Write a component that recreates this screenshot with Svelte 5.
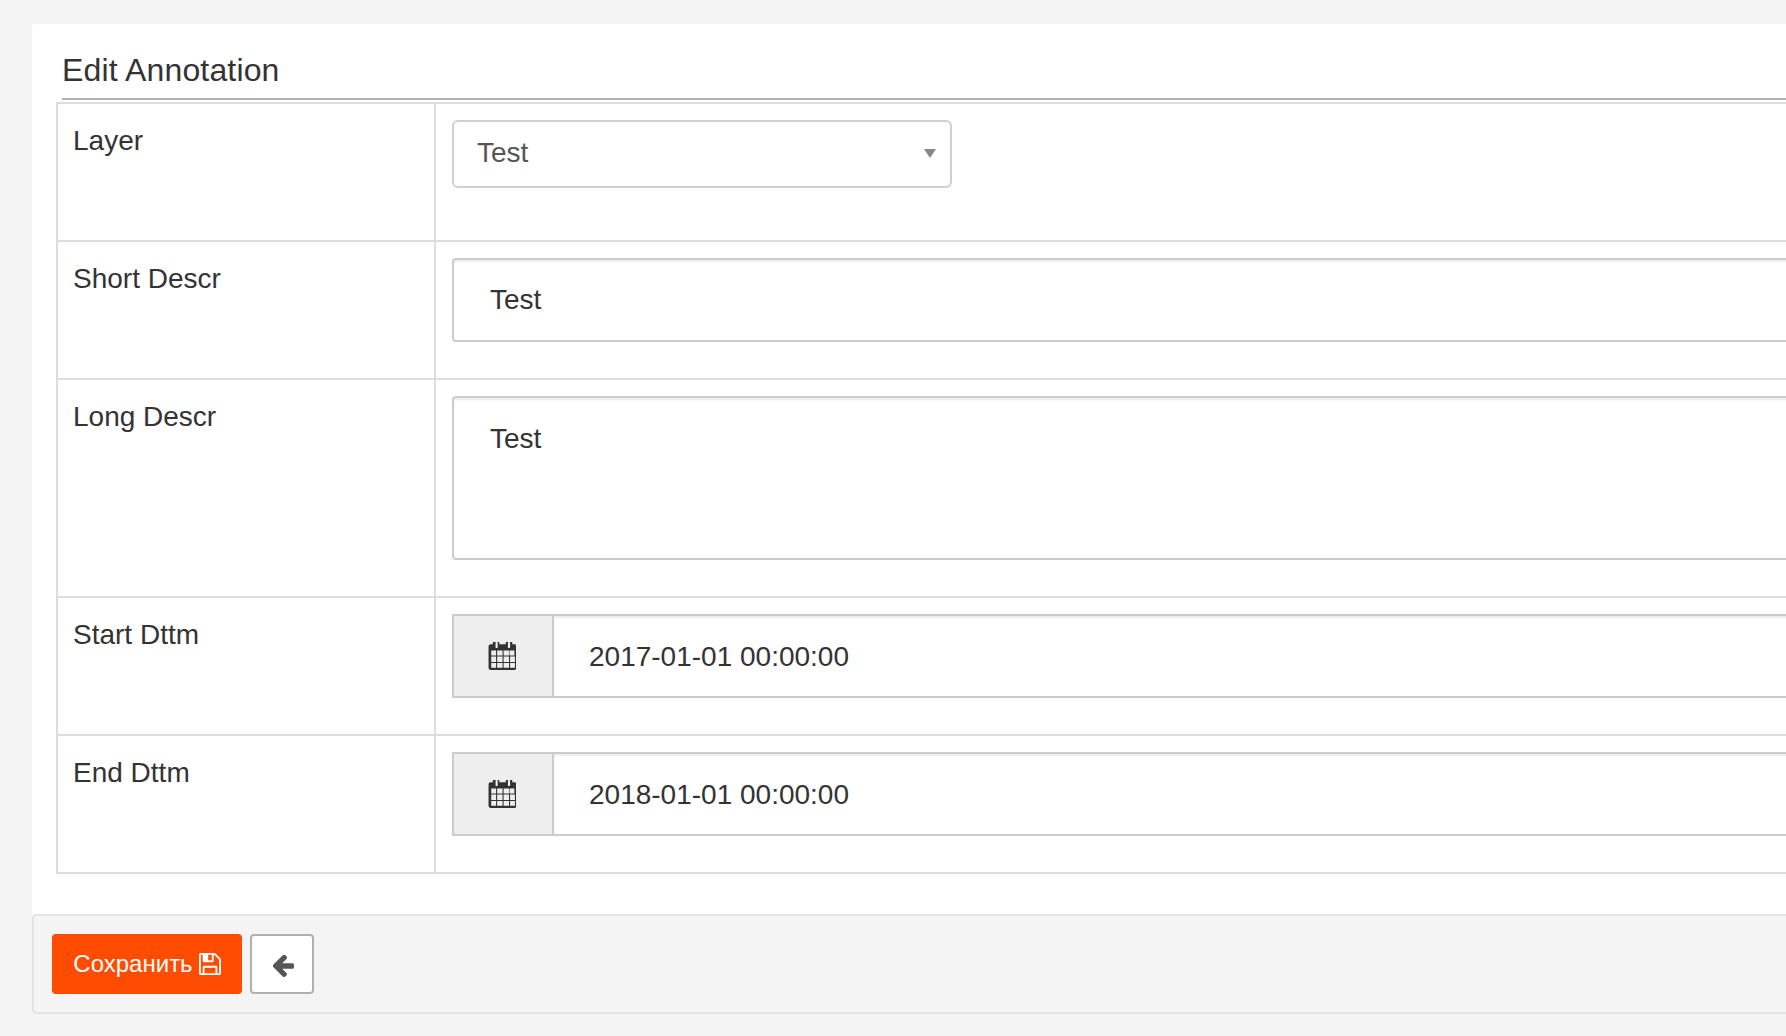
<script>
    // Rader i formuläret
    let rows = [
        { label: "Layer", kind: "select", value: "Test" },
        { label: "Short Descr", kind: "text", value: "Test" },
        { label: "Long Descr", kind: "area", value: "Test" },
        { label: "Start Dttm", kind: "date", value: "2017-01-01 00:00:00" },
        { label: "End Dttm", kind: "date", value: "2018-01-01 00:00:00" }
    ];
</script>

<div class="page">
    <div class="box">
        <h3>Edit Annotation</h3>
        <table>
            <tbody>
                {#each rows as row}
                    <tr class:tall={row.kind === "area"}>
                        <td class="label">{row.label}</td>
                        <td class="field">
                            {#if row.kind === "select"}
                                <div class="select">
                                    <select>
                                        <option>{row.value}</option>
                                    </select>
                                </div>
                            {:else if row.kind === "text"}
                                <input class="control" type="text" value={row.value} />
                            {:else if row.kind === "area"}
                                <textarea class="control">{row.value}</textarea>
                            {:else}
                                <div class="group">
                                    <span class="addon">
                                        <svg width="28" height="28" viewBox="0 128 1664 1664" fill="#333">
                                            <path d="M192 1664h288v-288h-288v288zm352 0h320v-288h-320v288zm-352-352h288v-320h-288v320zm352 0h320v-320h-320v320zm-352-384h288v-288h-288v288zm736 736h320v-288h-320v288zm-384-736h320v-288h-320v288zm768 736h288v-288h-288v288zm-384-352h320v-320h-320v320zm-352-864v-288q0-13-9.500-22.500t-22.500-9.500h-64q-13 0-22.500 9.500t-9.500 22.500v288q0 13 9.500 22.500t22.500 9.500h64q13 0 22.500-9.500t9.500-22.500zm736 864h288v-320h-288v320zm-384-384h320v-288h-320v288zm352 0h288v-288h-288v288zm32-480v-288q0-13-9.500-22.500t-22.500-9.500h-64q-13 0-22.500 9.500t-9.500 22.500v288q0 13 9.500 22.500t22.500 9.500h64q13 0 22.500-9.500t9.500-22.500zm384-64v1280q0 52-38 90t-90 38h-1408q-52 0-90-38t-38-90v-1280q0-52 38-90t90-38h128v-96q0-66 47-113t113-47h64q66 0 113 47t47 113v96h384v-96q0-66 47-113t113-47h64q66 0 113 47t47 113v96h128q52 0 90 38t38 90z" />
                                        </svg>
                                    </span>
                                    <input class="date" type="text" value={row.value} />
                                </div>
                            {/if}
                        </td>
                    </tr>
                {/each}
            </tbody>
        </table>
        <div class="footer">
            <button class="save">
                Сохранить
                <svg width="22" height="22" viewBox="128 128 1536 1536" fill="#fff">
                    <path d="M512 1536h768v-384h-768v384zm896 0h128v-896q0-14-10-38.500t-20-34.500l-281-281q-10-10-34-20t-39-10v416q0 40-28 68t-68 28h-576q-40 0-68-28t-28-68v-416h-128v1280h128v-416q0-40 28-68t68-28h832q40 0 68 28t28 68v416zm-384-928v-320q0-13-9.500-22.500t-22.500-9.500h-192q-13 0-22.500 9.500t-9.500 22.500v320q0 13 9.500 22.500t22.500 9.500h192q13 0 22.500-9.500t9.500-22.500zm640 32v928q0 40-28 68t-68 28h-1344q-40 0-68-28t-28-68v-1344q0-40 28-68t68-28h928q40 0 88 20t76 48l280 280q28 28 48 76t20 88z" />
                </svg>
            </button>
            <button class="back" aria-label="back">
                <svg width="22" height="24" viewBox="0 0 1536 1664" fill="#555">
                    <path transform="translate(-128 -64)" d="M1664 896v128q0 53-32.500 90.500t-84.500 37.500h-704l293 294q38 36 38 90t-38 90l-75 76q-37 37-90 37-52 0-91-37l-651-652q-37-37-37-90 0-52 37-91l651-650q38-38 91-38 52 0 90 38l75 74q38 38 38 91t-38 91l-293 293h704q52 0 84.500 37.500t32.500 90.500z" />
                </svg>
            </button>
        </div>
    </div>
</div>

<style>
    :global(body) {
        background: #f4f4f4;
        overflow: hidden;
    }

    .page {
        height: 1036px;
        overflow: hidden;
        padding: 24px 0 0 32px;
        box-sizing: border-box;
        font-family: "Liberation Sans", Arial, sans-serif;
        font-size: 28px;
        color: #333;
    }

    .box {
        width: 1900px;
        background: #fff;
        border-radius: 3px;
    }

    h3 {
        margin: 0 0 2px 30px;
        height: 76px;
        box-sizing: border-box;
        padding-top: 28px;
        font-size: 32px;
        font-weight: 400;
        line-height: 36px;
        letter-spacing: 0.15px;
        border-bottom: 2px solid #b0b0b0;
    }

    table {
        margin-left: 24px;
        width: 1870px;
        border-collapse: collapse;
        table-layout: fixed;
    }

    td {
        border: 2px solid #ddd;
        vertical-align: top;
        padding: 16px;
        height: 138px;
        box-sizing: border-box;
    }

    tr.tall td {
        height: 218px;
    }

    .label {
        width: 378px;
        padding-left: 15px;
        line-height: 42px;
    }

    .select {
        position: relative;
        width: 500px;
    }

    .select::after {
        content: "";
        position: absolute;
        right: 16px;
        top: 29px;
        border-left: 6px solid transparent;
        border-right: 6px solid transparent;
        border-top: 9px solid #888;
    }

    select {
        display: block;
        width: 100%;
        height: 68px;
        box-sizing: border-box;
        padding: 0 23px 3px;
        border: 2px solid #d0d0d0;
        border-radius: 6px;
        background: #fff;
        appearance: none;
        font: inherit;
        color: #555;
    }

    .control {
        display: block;
        width: 100%;
        height: 84px;
        box-sizing: border-box;
        padding: 0 36px;
        border: 2px solid #ccc;
        border-radius: 4px;
        box-shadow: inset 0 2px 2px rgba(0, 0, 0, 0.075);
        font: inherit;
        color: #333;
        resize: none;
    }

    textarea.control {
        height: 164px;
        padding: 24px 36px 0;
        line-height: 34px;
    }

    .group {
        display: flex;
        height: 84px;
    }

    .addon {
        display: flex;
        align-items: center;
        justify-content: center;
        width: 102px;
        box-sizing: border-box;
        padding-right: 2px;
        background: #eee;
        border: 2px solid #ccc;
    }

    .date {
        flex: 1;
        box-sizing: border-box;
        padding: 2px 35px 0;
        border: 2px solid #ccc;
        border-left: 0;
        box-shadow: inset 0 2px 2px rgba(0, 0, 0, 0.075);
        font: inherit;
        color: #333;
    }

    .footer {
        display: flex;
        gap: 8px;
        margin-top: 40px;
        padding: 18px;
        background: #f4f4f4;
        border: 2px solid #e4e4e4;
        border-radius: 4px;
    }

    button {
        height: 60px;
        box-sizing: border-box;
        display: flex;
        align-items: center;
        justify-content: center;
        font-family: inherit;
        border-radius: 4px;
    }

    .save {
        width: 190px;
        gap: 6px;
        padding: 0;
        border: 0;
        background: #ff4c00;
        color: #fff;
        font-size: 24px;
    }

    .back {
        width: 64px;
        padding: 2px 0 0 2px;
        background: #fff;
        border: 2px solid #b0b0b0;
    }
</style>
